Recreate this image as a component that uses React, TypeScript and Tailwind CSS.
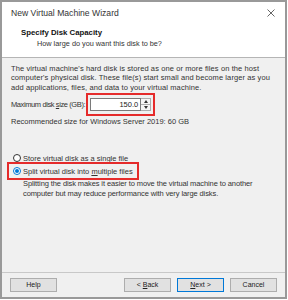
import React from "react";

const ui = { fontFamily: '"Liberation Sans", Arial, sans-serif' };

function Btn({ label, u, primary }: { label: string; u?: [string, string, string]; primary?: boolean }) {
  return (
    <div
      className={`w-[47px] h-[14px] flex items-center justify-center text-[7px] text-[#222] bg-[#e1e1e1] border ${
        primary ? "border-[#0078d7]" : "border-[#adadad]"
      }`}
    >
      {u ? (
        <span>
          {u[0]}
          <span className="underline">{u[1]}</span>
          {u[2]}
        </span>
      ) : (
        label
      )}
    </div>
  );
}

export default function App() {
  return (
    <div className="w-[288px] h-[300px] bg-white" style={ui}>
      <div className="w-[287px] h-[299px] border-2 border-[#999] flex flex-col">
        {/* title bar */}
        <div className="h-[22px] bg-white flex items-center justify-between pl-[9px] pr-[10px]">
          <span className="text-[8.6px] text-[#333]">New Virtual Machine Wizard</span>
          <svg width="8" height="8" viewBox="0 0 8 8" className="stroke-[#555]">
            <path d="M0.5 0.5L7.5 7.5M7.5 0.5L0.5 7.5" strokeWidth="0.9" />
          </svg>
        </div>
        {/* header */}
        <div className="h-[34px] bg-white border-b border-[#b5b5b5] pt-[3px]">
          <div className="pl-[19px] text-[7.8px] font-bold text-[#111] leading-[11px]">Specify Disk Capacity</div>
          <div className="pl-[35px] text-[7.3px] text-[#333] leading-[11px]">How large do you want this disk to be?</div>
        </div>
        {/* body */}
        <div className="flex-1 bg-[#f0f0f0] flex flex-col px-[9px] pt-[6px] text-[7.5px] text-[#333] whitespace-nowrap">
          <p className="leading-[9.3px] whitespace-normal tracking-[0.1px]">
            The virtual machine's hard disk is stored as one or more files on the host computer's physical disk. These
            file(s) start small and become larger as you add applications, files, and data to your virtual machine.
          </p>
          <div className="flex items-center mt-[1px] h-[23px] gap-[1px]">
            <span className="tracking-[-0.4px]">
              Maximum disk <span className="underline">s</span>ize (GB):
            </span>
            <div className="h-[23px] w-[69px] border-2 border-[#e52b2b] flex items-center pl-[2px]">
              <div className="w-[51px] h-[13px] bg-white border border-[#7a7a7a] flex items-center justify-end pr-[2px] text-[#222]">
                150.0
              </div>
              <div className="w-[10px] h-[13px] flex flex-col border border-l-0 border-[#adadad] bg-[#f5f5f5]">
                <div className="flex-1 flex items-center justify-center border-b border-[#adadad]">
                  <svg width="4" height="3" viewBox="0 0 4 3"><path d="M0 3L2 0L4 3Z" fill="#333" /></svg>
                </div>
                <div className="flex-1 flex items-center justify-center">
                  <svg width="4" height="3" viewBox="0 0 4 3"><path d="M0 0L2 3L4 0Z" fill="#333" /></svg>
                </div>
              </div>
            </div>
          </div>
          <div className="mt-[1px] leading-[9.5px]">Recommended size for Windows Server 2019: 60 GB</div>
          <div className="mt-[27px] flex items-center h-[10px] pl-[2px]">
            <span className="w-[8px] h-[8px] rounded-full border border-[#333] bg-white mr-[2px]" />
            <span>
              St<span className="underline">o</span>re virtual disk as a single file
            </span>
          </div>
          <div className="mt-[-1px] -ml-[4px] w-[132px] h-[18px] border-2 border-[#e52b2b] flex items-center pl-[4px]">
            <span className="w-[8px] h-[8px] rounded-full border border-[#0078d7] bg-white mr-[2px] flex items-center justify-center">
              <span className="w-[4px] h-[4px] rounded-full bg-[#0078d7]" />
            </span>
            <span>
              Split virtual disk into <span className="underline">m</span>ultiple files
            </span>
          </div>
          <p className="pl-[12px] mt-[-1px] leading-[10px] whitespace-normal tracking-[-0.1px]">
            Splitting the disk makes it easier to move the virtual machine to another computer but may reduce
            performance with very large disks.
          </p>
        </div>
        {/* footer */}
        <div className="h-[25px] bg-[#f0f0f0] border-t border-[#c8c8c8] flex items-center pl-[8px] pr-[8px]">
          <Btn label="Help" />
          <div className="flex-1" />
          <div className="flex gap-[6px]">
            <Btn label="< Back" u={["< ", "B", "ack"]} />
            <Btn label="Next >" u={["", "N", "ext >"]} primary />
            <Btn label="Cancel" />
          </div>
        </div>
      </div>
    </div>
  );
}
